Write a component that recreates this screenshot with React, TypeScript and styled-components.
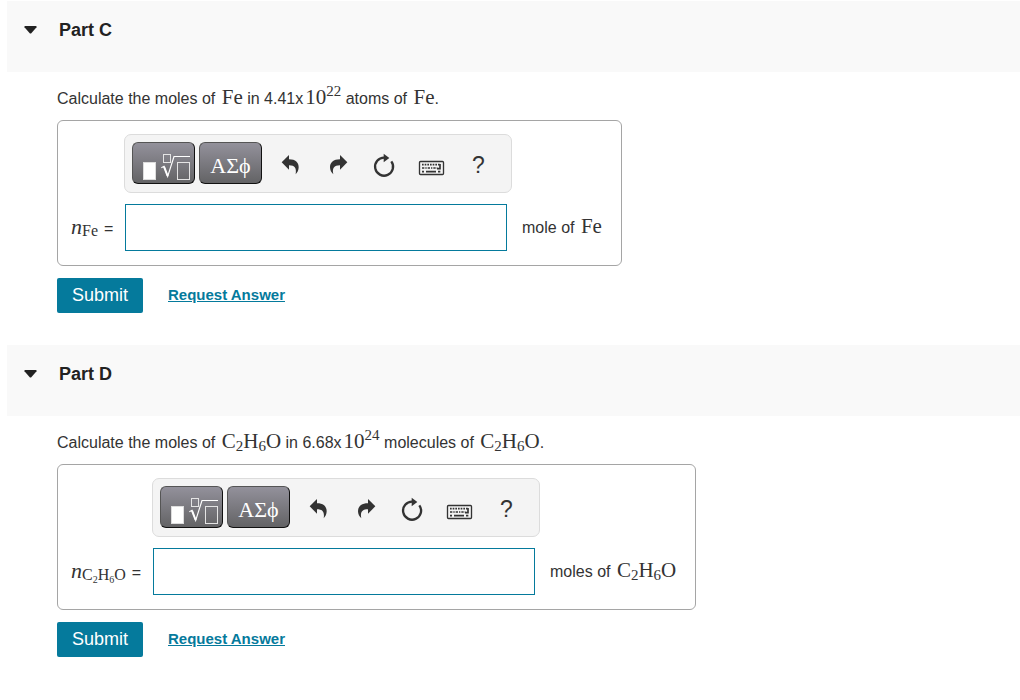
import React, { useId, useState } from "react";
import styled, { createGlobalStyle } from "styled-components";

const SANS = '"Liberation Sans", Arial, Helvetica, sans-serif';
const SERIF = '"Liberation Serif", "Times New Roman", serif';

const GlobalStyle = createGlobalStyle`
  * { box-sizing: border-box; }
  body {
    margin: 0;
    background: #fff;
    color: #333;
    font-family: ${SANS};
    font-size: 16px;
  }
`;

const Page = styled.main`
  display: flex;
  flex-direction: column;
  gap: 32px;
  padding: 1px 0 32px 7px;
`;

const Section = styled.section``;

const SectionHeader = styled.header`
  height: 71px;
  padding: 18px 17px;
  background: #f9f9f9;
`;

const SectionTitle = styled.h2`
  margin: 0;
  font-size: 18px;
  line-height: 22px;
`;

const ToggleButton = styled.button`
  display: flex;
  align-items: center;
  gap: 22px;
  padding: 0;
  border: 0;
  background: none;
  color: #222;
  font: inherit;
  cursor: pointer;
`;

const SectionBody = styled.div`
  padding: 13px 16px 0 50px;
`;

const Question = styled.p`
  margin: 0 0 7px;
  line-height: 28px;
`;

const Formula = styled.span`
  margin-left: 2px;
  font-family: ${SERIF};
  font-size: 21px;
  line-height: 1;

  sub,
  sup {
    font-size: 15px;
    line-height: 0;
  }
  sub { vertical-align: -3px; }
  sup { vertical-align: 8px; }
`;

const AnswerBox = styled.div<{ $label: number; $unit: number }>`
  display: grid;
  grid-template-columns: ${(p) => p.$label}px minmax(0, 382px) ${(p) => p.$unit}px;
  row-gap: 11px;
  width: fit-content;
  max-width: 100%;
  padding: 13px 19px 14px 13px;
  border: 1px solid #a5a5a5;
  border-radius: 6px;
`;

const Toolbar = styled.div`
  grid-column: 2 / -1;
  justify-self: start;
  display: flex;
  gap: 5px;
  margin-left: -1px;
  padding: 7px 9px 8px 7px;
  border: 1px solid #dcdcdc;
  border-radius: 7px;
  background: #f4f4f4;
`;

const PaletteGroup = styled.div`
  display: flex;
  gap: 4px;
`;

const ToolGroup = styled.div`
  display: flex;
`;

const PaletteButton = styled.button`
  width: 63px;
  height: 42px;
  padding: 0;
  border: 1px solid;
  border-color: #555 #111 #111 #555;
  border-radius: 6px;
  background: linear-gradient(#93919b, #636365);
  color: #fff;
  font-family: ${SERIF};
  font-size: 22px;
  line-height: 46px;
  cursor: pointer;

  svg { display: block; width: 61px; height: 40px; }
`;

const ToolButton = styled.button`
  width: 47px;
  height: 42px;
  padding: 4px 0 0;
  border: 0;
  background: none;
  color: #333;
  font-family: ${SANS};
  font-size: 23px;
  cursor: pointer;
`;

const ToolIcon = styled(ToolButton)`
  padding: 0;

  svg { display: block; width: 47px; height: 42px; }
`;

const VariableLabel = styled.label`
  grid-column: 1;
  align-self: center;
  white-space: nowrap;
`;

const Variable = styled.span`
  margin-right: 6px;
  font-family: ${SERIF};
  font-size: 16px;

  i { font-size: 22px; line-height: 20px; }
  > sub { font-size: 16px; vertical-align: -2px; line-height: 0; }
  sub sub { font-size: 10px; vertical-align: -3px; line-height: 0; }
`;

const AnswerInput = styled.input`
  width: 100%;
  height: 47px;
  padding: 0 8px;
  border: 1px solid #057a9c;
  border-radius: 0;
  background: #fff;
  color: #333;
  font-family: ${SANS};
  font-size: 18px;
`;

const Unit = styled.span`
  align-self: center;
  padding-left: 15px;
  line-height: 24px;
  white-space: nowrap;
`;

const Actions = styled.div`
  display: flex;
  align-items: center;
  gap: 25px;
  margin-top: 12px;
`;

const SubmitButton = styled.button`
  width: 86px;
  height: 35px;
  padding: 0;
  border: 0;
  border-radius: 2px;
  background: #057a9c;
  color: #fff;
  font-family: ${SANS};
  font-size: 18px;
  cursor: pointer;
`;

const RequestLink = styled.a`
  color: #057a9c;
  font-size: 15px;
  line-height: 18px;
  padding-bottom: 2px;
  font-weight: bold;
`;

const Caret = () => (
  <svg width="13" height="8" viewBox="0 0 13 8" aria-hidden="true">
    <path d="M1 0H12Q13 .4 12.5 1.2L7.3 7.2Q6.5 8 5.7 7.2L.5 1.2Q0 .4 1 0Z" fill="#222" />
  </svg>
);

const TemplateIcon = () => (
  <svg viewBox="39 39 183 120" fill="none" aria-hidden="true">
    <rect x="70.5" y="97.5" width="36" height="51" fill="#fff" stroke="#ddd" strokeWidth="3" />
    <rect x="130.5" y="73.5" width="21" height="24" stroke="#e4e4e4" strokeWidth="3" />
    <path d="M124 113L132 109L143 139L162 79.5H210" stroke="#fff" strokeWidth="3.5" />
    <path d="M132 110L143 138" stroke="#fff" strokeWidth="6" />
    <rect x="172.5" y="97.5" width="36" height="51" stroke="#e4e4e4" strokeWidth="3" />
  </svg>
);

const UndoIcon = () => (
  <svg viewBox="6 36 141 126" aria-hidden="true">
    <path d="M50 97L72 75V88C92 88 101 98 101 112C101 121 97 128 92 133C95 115 90 106 72 106V119Z" fill="currentColor" />
  </svg>
);

const RedoIcon = () => (
  <svg viewBox="147 36 141 126" aria-hidden="true">
    <path d="M247 97L225 75V88C205 88 195 98 195 112C195 121 199 128 205 133C201 115 207 106 225 106V119Z" fill="currentColor" />
  </svg>
);

const ResetIcon = () => (
  <svg viewBox="288 36 141 126" aria-hidden="true">
    <path d="M379 94A27 27 0 1 1 358 83" fill="none" stroke="currentColor" strokeWidth="7" />
    <path d="M356 71L373 84L356 97Z" fill="currentColor" />
  </svg>
);

const KeyboardIcon = () => (
  <svg viewBox="429 36 141 126" fill="none" stroke="currentColor" aria-hidden="true">
    <rect x="463.5" y="94.5" width="72" height="39" rx="3" strokeWidth="4" />
    <path d="M471 104H525" strokeWidth="5" strokeDasharray="5 3" />
    <path d="M471 114H517" strokeWidth="5" strokeDasharray="7 3 4 3" />
    <path d="M525 102V116H516" strokeWidth="5" />
    <path d="M471 125H477M483 125H513M519 125H526" strokeWidth="5" />
  </svg>
);

const EquationToolbar = () => (
  <Toolbar role="toolbar" aria-label="Equation tools">
    <PaletteGroup>
      <PaletteButton type="button" aria-label="Templates"><TemplateIcon /></PaletteButton>
      <PaletteButton type="button" aria-label="Symbols">ΑΣϕ</PaletteButton>
    </PaletteGroup>
    <ToolGroup>
      <ToolIcon type="button" aria-label="Undo"><UndoIcon /></ToolIcon>
      <ToolIcon type="button" aria-label="Redo"><RedoIcon /></ToolIcon>
      <ToolIcon type="button" aria-label="Reset"><ResetIcon /></ToolIcon>
      <ToolIcon type="button" aria-label="Keyboard shortcuts"><KeyboardIcon /></ToolIcon>
      <ToolButton type="button" aria-label="Help">?</ToolButton>
    </ToolGroup>
  </Toolbar>
);

const Ethanol = () => (
  <>C<sub>2</sub>H<sub>6</sub>O</>
);

interface PartProps {
  title: string;
  substance: React.ReactNode;
  coefficient: string;
  exponent: string;
  particles: string;
  unit: string;
  labelWidth: number;
  unitWidth: number;
}

const Part = ({ title, substance, coefficient, exponent, particles, unit, labelWidth, unitWidth }: PartProps) => {
  const [open, setOpen] = useState(true);
  const inputId = useId();
  return (
    <Section>
      <SectionHeader>
        <SectionTitle>
          <ToggleButton type="button" aria-expanded={open} onClick={() => setOpen(!open)}>
            <Caret />
            {title}
          </ToggleButton>
        </SectionTitle>
      </SectionHeader>
      {open && (
        <SectionBody>
          <Question>
            Calculate the moles of <Formula>{substance}</Formula> in {coefficient}x
            <Formula>10<sup>{exponent}</sup></Formula> {particles} of <Formula>{substance}</Formula>.
          </Question>
          <AnswerBox $label={labelWidth} $unit={unitWidth}>
            <EquationToolbar />
            <VariableLabel htmlFor={inputId}>
              <Variable><i>n</i><sub>{substance}</sub></Variable>=
            </VariableLabel>
            <AnswerInput id={inputId} type="text" autoComplete="off" />
            <Unit>{unit} of <Formula>{substance}</Formula></Unit>
          </AnswerBox>
          <Actions>
            <SubmitButton type="button">Submit</SubmitButton>
            <RequestLink href="#request-answer">Request Answer</RequestLink>
          </Actions>
        </SectionBody>
      )}
    </Section>
  );
};

export default function App() {
  return (
    <>
      <GlobalStyle />
      <Page>
        <Part title="Part C" substance="Fe" coefficient="4.41" exponent="22" particles="atoms" unit="mole" labelWidth={54} unitWidth={95} />
        <Part title="Part D" substance={<Ethanol />} coefficient="6.68" exponent="24" particles="molecules" unit="moles" labelWidth={82} unitWidth={141} />
      </Page>
    </>
  );
}
